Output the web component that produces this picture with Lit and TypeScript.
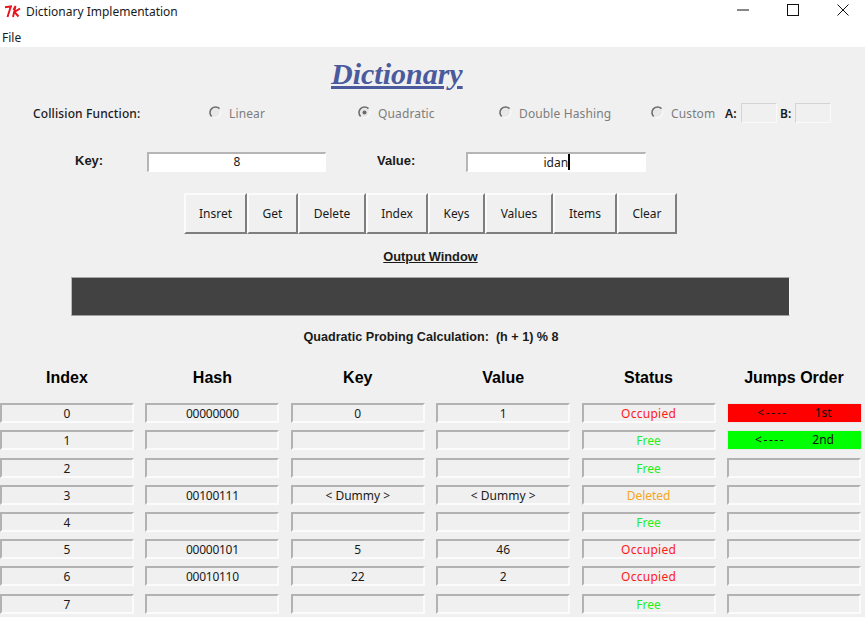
import { LitElement, html, css, svg } from "lit";
import { customElement } from "lit/decorators.js";

type Row = { i: string; h: string; k: string; v: string; s: string; a?: string; l?: string; jc?: string };
const rows: Row[] = [
  { i: "0", h: "00000000", k: "0", v: "1", s: "Occupied", a: "<----", l: "1st", jc: "red" },
  { i: "1", h: "", k: "", v: "", s: "Free", a: "<----", l: "2nd", jc: "green" },
  { i: "2", h: "", k: "", v: "", s: "Free" },
  { i: "3", h: "00100111", k: "< Dummy >", v: "< Dummy >", s: "Deleted" },
  { i: "4", h: "", k: "", v: "", s: "Free" },
  { i: "5", h: "00000101", k: "5", v: "46", s: "Occupied" },
  { i: "6", h: "00010110", k: "22", v: "2", s: "Occupied" },
  { i: "7", h: "", k: "", v: "", s: "Free" },
];
const buttons: [string, number][] = [
  ["Insret", 63], ["Get", 51], ["Delete", 68], ["Index", 62], ["Keys", 57], ["Values", 68], ["Items", 64], ["Clear", 60],
];

@customElement("app-root")
export class AppRoot extends LitElement {
  static styles = css`
    :host { display: block; width: 865px; height: 617px; overflow: hidden; background: #f0f0f0;
      font-family: "Noto Sans", "Open Sans", sans-serif; font-size: 12px; color: #1a1a1a; }
    .titlebar { height: 28px; background: #fff; display: flex; align-items: center; padding-left: 4px; }
    .tk { width: 17px; height: 13px; margin-right: 5px; margin-top: -6px; }
    .wintitle { flex: 1; font-size: 12px; margin-top: -6px; }
    .wc { width: 50px; height: 20px; margin-top: -8px; display: flex; justify-content: center; align-items: center; }
    .wc svg { width: 12px; height: 12px; }
    .wcs { display: flex; margin-right: -3px; }
    .menu { height: 19px; background: #fff; padding-left: 2px; line-height: 19px; font-size: 12px; }
    .title { height: 45px; padding-left: 331px; box-sizing: border-box; padding-top: 9px; }
    .title span { font: italic bold 30px/36px "Liberation Serif", serif; color: #4a5a9c; text-decoration: underline; }
    .coll { display: grid; grid-template-columns: 176px 149px 141px 152px 74px 16px 39px 15px 36px; height: 24px; padding-left: 33px;
      align-items: center; margin-top: 9px; letter-spacing: .13px; }
    .coll .lab { font-weight: 500; }
    .radio { display: flex; align-items: center; gap: 7px; color: #7d7d7d; }
    .radio svg { width: 13px; height: 13px; margin-top: -2px; }
    .ab { font-weight: 600; }
    .mini { height: 20px; box-sizing: border-box; width: 36px; border: 1px solid #d4d4d4; border-right-color: #fafafa; border-bottom-color: #fafafa; }
    .keys { display: grid; grid-template-columns: 72px 179px 51px 89px 180px; padding-left: 75px; align-items: center; margin-top: 27px; height: 20px; }
    .keys b { font: bold 13px/18px "Liberation Sans", sans-serif; margin-top: -2px; }
    .entry { height: 20px; box-sizing: border-box; background: #fff; border: 1px solid #fff; border-top: 2px solid #b5b5b5; border-left: 2px solid #b5b5b5;
      text-align: center; line-height: 15px; }
    .caret { display: inline-block; width: 1.5px; height: 16px; background: #000; vertical-align: -3px; }
    .btns { display: flex; padding-left: 184px; margin-top: 21px; gap: 0; }
    .btn { height: 41px; box-sizing: border-box; display: flex; align-items: center; justify-content: center; background: #f0f0f0;
      border: 2px solid; border-color: #fbfbfb #7e7e7e #7e7e7e #fbfbfb; }
    .owt { text-align: center; margin-top: 14px; font: bold 12.8px/17px "Liberation Sans", sans-serif; text-decoration: underline; padding-right: 4px; }
    .output { margin: 12px 0 0 71px; width: 719px; height: 39px; box-sizing: border-box; background: #414241;
      border: 1px solid; border-color: #a8a8a8 #f8f8f8 #a0a0a0 #b8b8b8; }
    .calc { text-align: center; margin-top: 13px; font: bold 12.6px/17px "Liberation Sans", sans-serif; height: 17px; padding-right: 3px; white-space: pre; }
    .table { display: grid; grid-template-columns: repeat(6, 134px); column-gap: 11.4px; margin-top: 22px; row-gap: 7.2px; }
    .head { font: bold 16px/20px "Liberation Sans", sans-serif; color: #000; text-align: center; height: 29px; margin-bottom: -1px; }
    .cell { height: 20px; box-sizing: border-box; border: 2px solid; border-color: #b2b2b2 #fbfbfb #fbfbfb #b2b2b2; text-align: center; line-height: 17px; white-space: pre; }
    .hash { letter-spacing: -.25px; }
    .Occupied { color: #ff1a1a; letter-spacing: .25px; }
    .Free { color: #22f022; }
    .Deleted { color: #f5a623; }
    .red, .green { color: #111; border: 1px solid #e8e8e8; line-height: 18px; margin-right: -1px; }
    .red { background: #ff0000; }
    .green { background: #00ff00; }
    .arrow { letter-spacing: 1.6px; margin-right: 27px; }
  `;

  radio(on: boolean) {
    return html`<svg viewBox="0 0 13 13">
      <circle cx="6.5" cy="6.5" r="5" fill="#e8e8e8" />
      <path d="M10.5 2.6A5.4 5.4 0 0 0 2.6 10.5" fill="none" stroke="#6e6e6e" stroke-width="1.6" />
      <path d="M11.5 5A5.4 5.4 0 0 1 5 11.5" fill="none" stroke="#fafafa" stroke-width="1.4" />
      ${on ? svg`<circle cx="6.5" cy="6.5" r="2" fill="#6a6a6a" />` : ""}
    </svg>`;
  }

  render() {
    return html`
      <div class="titlebar">
        <svg class="tk" viewBox="0 0 17 13">
          <path d="M1 2.2 8 1.2M6.8 1.5 3.5 12M9.5 5 11.5 .8M11.5 1 9 12M16 3.5 10.5 7 14.5 11.5" fill="none" stroke="#e8141c" stroke-width="1.9" />
        </svg>
        <div class="wintitle">Dictionary Implementation</div>
        <div class="wcs">
          <div class="wc"><svg viewBox="0 0 12 12"><path d="M0 6H12" stroke="#111" stroke-width="1" /></svg></div>
          <div class="wc"><svg viewBox="0 0 12 12"><rect x=".5" y=".5" width="11" height="11" fill="none" stroke="#111" /></svg></div>
          <div class="wc"><svg viewBox="0 0 12 12"><path d="M.5.5 11.5 11.5M11.5.5.5 11.5" stroke="#111" stroke-width="1" /></svg></div>
        </div>
      </div>
      <div class="menu">File</div>
      <div class="title"><span>Dictionary</span></div>
      <div class="coll">
        <div class="lab">Collision Function:</div>
        <div class="radio">${this.radio(false)}Linear</div>
        <div class="radio">${this.radio(true)}Quadratic</div>
        <div class="radio">${this.radio(false)}Double Hashing</div>
        <div class="radio">${this.radio(false)}Custom</div>
        <div class="ab">A:</div><div class="mini"></div>
        <div class="ab">B:</div><div class="mini"></div>
      </div>
      <div class="keys">
        <b>Key:</b><div class="entry">8</div>
        <span></span>
        <b>Value:</b><div class="entry">idan<span class="caret"></span></div>
      </div>
      <div class="btns">
        ${buttons.map(([t, w]) => html`<div class="btn" style="width:${w}px">${t}</div>`)}
      </div>
      <div class="owt">Output Window</div>
      <div class="output"></div>
      <div class="calc">Quadratic Probing Calculation:  (h + 1) % 8</div>
      <div class="table">
        ${["Index", "Hash", "Key", "Value", "Status", "Jumps Order"].map((h) => html`<div class="head">${h}</div>`)}
        ${rows.map(
          (r) => html`
            <div class="cell">${r.i}</div>
            <div class="cell hash">${r.h}</div>
            <div class="cell">${r.k}</div>
            <div class="cell">${r.v}</div>
            <div class="cell ${r.s}">${r.s}</div>
            <div class="cell ${r.jc ?? ""}">${r.a ? html`<span class="arrow">${r.a}</span>${r.l}` : ""}</div>
          `
        )}
      </div>
    `;
  }
}
